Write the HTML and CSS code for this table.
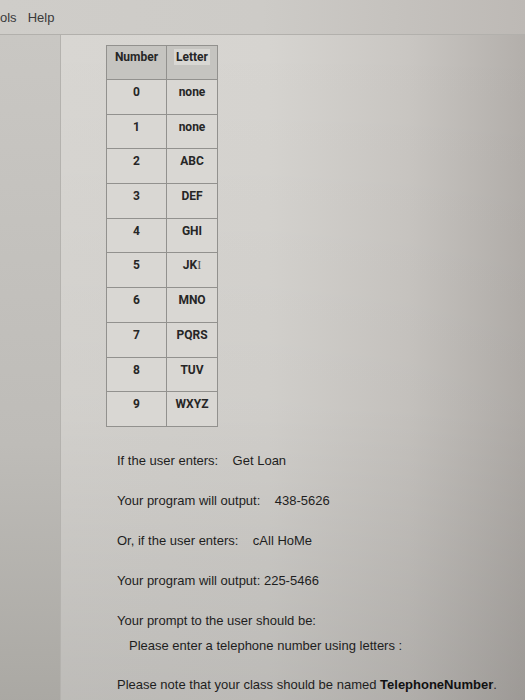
FILE: index.html
```html
<!DOCTYPE html>
<html>
<head>
<meta charset="utf-8">
<link rel="stylesheet" href="styles.css">
</head>
<body>
<div class="page">
  <div class="menubar">
    <span class="menu-item cut">ols</span>
    <span class="menu-item">Help</span>
  </div>
  <div class="workspace">
    <div class="sidebar"></div>
    <div class="doc">
      <table class="keypad">
        <thead>
          <tr><th class="num-h">Number</th><th class="let-h"><span class="sel">Letter</span></th></tr>
        </thead>
        <tbody>
          <tr><td>0</td><td>none</td></tr>
          <tr><td>1</td><td>none</td></tr>
          <tr><td>2</td><td>ABC</td></tr>
          <tr><td>3</td><td>DEF</td></tr>
          <tr><td>4</td><td>GHI</td></tr>
          <tr><td>5</td><td>JK<span class="cursor">I</span></td></tr>
          <tr><td>6</td><td>MNO</td></tr>
          <tr><td>7</td><td>PQRS</td></tr>
          <tr><td>8</td><td>TUV</td></tr>
          <tr><td>9</td><td>WXYZ</td></tr>
        </tbody>
      </table>
      <div class="text">
        <p class="line">If the user enters:&nbsp;&nbsp;&nbsp; Get Loan</p>
        <p class="line">Your program will output:&nbsp;&nbsp;&nbsp; 438-5626</p>
        <p class="line">Or, if the user enters:&nbsp;&nbsp;&nbsp; cAll HoMe</p>
        <p class="line">Your program will output: 225-5466</p>
        <p class="line">Your prompt to the user should be:</p>
        <p class="line indent">Please enter a telephone number using letters :</p>
        <p class="line note">Please note that your class should be named <b>TelephoneNumber</b>.</p>
      </div>
    </div>
  </div>
</div>
</body>
</html>
```

FILE: styles.css
```css
html, body {
  margin: 0;
  padding: 0;
}
body {
  width: 525px;
  height: 700px;
  overflow: hidden;
  font-family: "Liberation Sans", Arial, sans-serif;
  color: #1e1e1e;
  background: #c9c7c3;
}
.page {
  display: flex;
  flex-direction: column;
  height: 700px;
}
.menubar {
  height: 35px;
  flex: none;
  display: flex;
  align-items: center;
  gap: 11px;
  box-sizing: border-box;
  border-bottom: 1px solid #b2b0ac;
  background: linear-gradient(to right, #cfcdc9 0%, #cdcbc7 50%, #bdb9b5 100%);
  font-size: 13px;
  color: #3a3a3a;
  padding-top: 1px;
}
.menu-item.cut {
  margin-left: 0;
}
.workspace {
  flex: 1;
  display: flex;
}
.sidebar {
  width: 60px;
  flex: none;
  border-right: 1px solid #b4b2ae;
  background: linear-gradient(to bottom, #c9c7c3 0%, #bebcb8 60%, #a9a7a2 100%);
}
.doc {
  flex: 1;
  padding-left: 45px;
  padding-top: 10px;
  background:
    linear-gradient(to bottom, rgba(0,0,0,0) 0%, rgba(0,0,0,0.03) 55%, rgba(0,0,0,0.13) 100%),
    linear-gradient(to right, #d8d6d2 0%, #d6d4d0 45%, #c9c6c2 75%, #b3afab 100%);
}
.keypad {
  border-collapse: collapse;
  font-family: Roboto, "Liberation Sans", sans-serif;
  font-weight: bold;
  font-size: 12px;
  color: #262626;
  border: 1px solid #8c8b88;
}
.keypad th, .keypad td {
  border: 1px solid #92918e;
  text-align: center;
  padding: 0;
  box-sizing: border-box;
}
.keypad th {
  height: 34px;
  vertical-align: top;
  padding-top: 4px;
  background: #c5c4c0;
  font-size: 12px;
}
.num-h {
  width: 60px;
}
.let-h {
  width: 51px;
}
.sel {
  background: #d8d7d3;
  padding: 1px 2px;
}
.keypad td {
  height: 34.7px;
  vertical-align: top;
  padding-top: 5px;
  background: #d9d7d3;
}
.cursor {
  font-weight: normal;
  font-family: "Liberation Serif", serif;
  color: #555;
  font-size: 12px;
}
.text {
  padding-left: 11px;
  padding-top: 26px;
  font-size: 13px;
}
.line {
  margin: 0 0 24px 0;
  line-height: 16px;
}
.text .line:nth-child(5) {
  margin-bottom: 9px;
}
.indent {
  padding-left: 12px;
  margin-bottom: 23px;
}
.note b {
  color: #111;
}
```
